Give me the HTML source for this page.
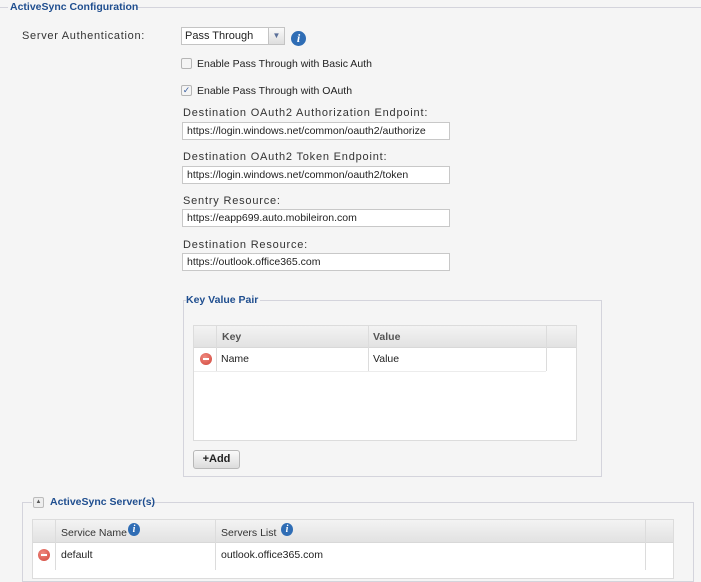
<!DOCTYPE html>
<html><head><style>
*{box-sizing:border-box;margin:0;padding:0}
body{width:701px;height:573px;background:#f5f5f5;font-family:"Liberation Sans",sans-serif;font-size:10.5px;color:#222;position:relative;overflow:hidden}
.a{position:absolute;white-space:nowrap}
.lb{font-size:11px;letter-spacing:0.8px;color:#333}
.leg{color:#1f4e8f;font-weight:bold;font-size:10.5px}
.line{position:absolute;height:1px;background:#d4d4dc}
.inp{position:absolute;left:182px;width:268px;height:18px;background:#fff;border:1px solid #c8c8c8;padding:2px 4px;font-size:10.5px}
.cb{position:absolute;left:181px;width:11px;height:11px;border:1px solid #b5b5b5;background:#f4f4f4;border-radius:2px}
.info{position:absolute;border-radius:50%;background:#2f6db5;color:#fff;font-weight:bold;font-family:"Liberation Serif",serif;font-style:italic;text-align:center}
.hdr{position:absolute;background:linear-gradient(#f3f3f3,#e2e2e2);border-bottom:1px solid #d8d8d8}
.vl{position:absolute;width:1px;background:#dcdcdc}
.del{position:absolute;width:12px;height:12px;border-radius:50%;background:radial-gradient(circle at 40% 35%,#f08a80,#d0453a)}
.del:after{content:"";position:absolute;left:3px;top:5px;width:6px;height:2px;background:#fff}
.th{color:#555;font-weight:bold;font-size:10.5px}
</style></head><body>
<div class="line" style="left:0;width:8px;top:7px"></div>
<div class="line" style="left:136px;right:0;top:7px"></div>
<div class="a leg" style="left:10px;top:1px">ActiveSync Configuration</div>
<div class="a lb" style="left:22px;top:30px;letter-spacing:0.7px">Server Authentication:</div>
<div class="a" style="left:181px;top:27px;width:88px;height:18px;background:#fff;border:1px solid #c4c4c4;padding:2px 3px;font-size:11px">Pass Through</div>
<div class="a" style="left:268px;top:27px;width:17px;height:18px;background:linear-gradient(#fafafa,#dedede);border:1px solid #c4c4c4;color:#5a6f99;font-size:8px;text-align:center;line-height:16px">&#9660;</div>
<div class="info" style="left:291px;top:31px;width:15px;height:15px;font-size:12px;line-height:15px">i</div>
<div class="cb" style="top:58px"></div>
<div class="a" style="left:197px;top:58px">Enable Pass Through with Basic Auth</div>
<div class="cb" style="top:85px;color:#3a5fa0;font-size:9px;line-height:9px;text-align:center">&#10003;</div>
<div class="a" style="left:197px;top:85px">Enable Pass Through with OAuth</div>
<div class="a lb" style="left:183px;top:107px">Destination OAuth2 Authorization Endpoint:</div>
<div class="inp" style="top:122px">https://login.windows.net/common/oauth2/authorize</div>
<div class="a lb" style="left:183px;top:151px">Destination OAuth2 Token Endpoint:</div>
<div class="inp" style="top:166px">https://login.windows.net/common/oauth2/token</div>
<div class="a lb" style="left:183px;top:195px">Sentry Resource:</div>
<div class="inp" style="top:209px">https://eapp699.auto.mobileiron.com</div>
<div class="a lb" style="left:183px;top:239px">Destination Resource:</div>
<div class="inp" style="top:253px">https://outlook.office365.com</div>

<div class="a" style="left:183px;top:300px;width:419px;height:177px;border:1px solid #d4d4dc;border-top:none"></div>
<div class="line" style="left:183px;width:3px;top:300px"></div>
<div class="line" style="left:260px;width:342px;top:300px"></div>
<div class="a leg" style="left:186px;top:294px">Key Value Pair</div>
<div class="a" style="left:193px;top:325px;width:384px;height:116px;background:#fff;border:1px solid #dcdcdc"></div>
<div class="hdr" style="left:194px;top:326px;width:382px;height:22px"></div>
<div class="vl" style="left:216px;top:326px;height:45px"></div>
<div class="vl" style="left:368px;top:326px;height:45px"></div>
<div class="vl" style="left:546px;top:326px;height:45px"></div>
<div class="line" style="left:194px;width:352px;top:371px;background:#ececec"></div>
<div class="a th" style="left:222px;top:331px">Key</div>
<div class="a th" style="left:373px;top:331px">Value</div>
<div class="del" style="left:200px;top:353px"></div>
<div class="a" style="left:221px;top:353px">Name</div>
<div class="a" style="left:373px;top:353px">Value</div>
<div class="a" style="left:193px;top:450px;width:47px;height:19px;border:1px solid #b8b8b8;border-radius:3px;background:linear-gradient(#fafafa,#dcdcdc);font-weight:bold;text-align:center;line-height:17px;font-size:11px">+Add</div>

<div class="a" style="left:22px;top:502px;width:672px;height:80px;border:1px solid #d4d4dc;border-top:none"></div>
<div class="line" style="left:22px;width:10px;top:502px"></div>
<div class="line" style="left:152px;width:542px;top:502px"></div>
<div class="a" style="left:33px;top:497px;width:11px;height:11px;border:1px solid #bbb;border-radius:2px;background:#eee;font-size:6px;text-align:center;line-height:9px;color:#555">&#9650;</div>
<div class="a leg" style="left:50px;top:496px">ActiveSync Server(s)</div>
<div class="a" style="left:32px;top:519px;width:642px;height:60px;background:#fff;border:1px solid #dcdcdc"></div>
<div class="hdr" style="left:33px;top:520px;width:640px;height:23px"></div>
<div class="vl" style="left:55px;top:520px;height:50px"></div>
<div class="vl" style="left:215px;top:520px;height:50px"></div>
<div class="vl" style="left:645px;top:520px;height:50px"></div>
<div class="a" style="left:61px;top:527px;color:#333">Service Name</div>
<div class="info" style="left:128px;top:523px;width:12px;height:13px;font-size:10px;line-height:13px">i</div>
<div class="a" style="left:221px;top:527px;color:#333">Servers List</div>
<div class="info" style="left:281px;top:523px;width:12px;height:13px;font-size:10px;line-height:13px">i</div>
<div class="del" style="left:38px;top:549px"></div>
<div class="a" style="left:61px;top:549px">default</div>
<div class="a" style="left:221px;top:549px">outlook.office365.com</div>
</body></html>
